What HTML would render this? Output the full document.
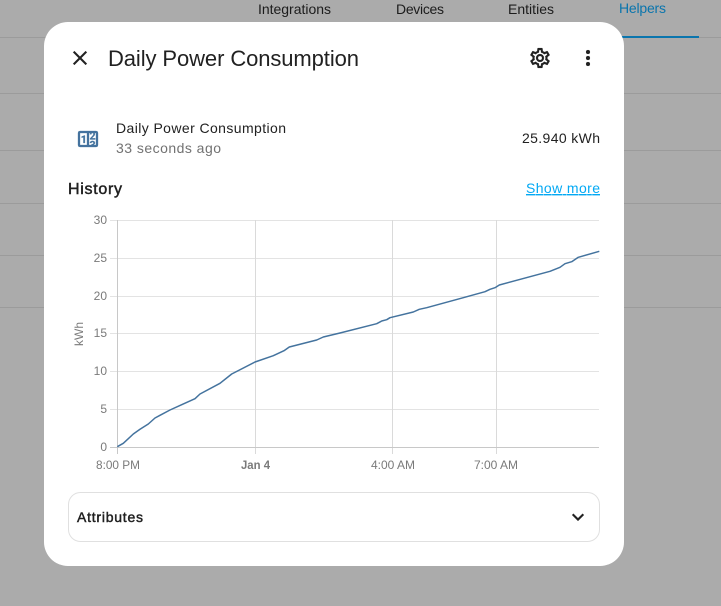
<!DOCTYPE html>
<html>
<head>
<meta charset="utf-8">
<title>Daily Power Consumption</title>
<style>
html,body{margin:0;padding:0;width:721px;height:606px;overflow:hidden;background:#ababab}
svg{display:block;font-family:"Liberation Sans",sans-serif}
.m{stroke-width:.45px}
.i{stroke:#212121;stroke-width:.15px}
</style>
</head>
<body>
<svg width="721" height="606" viewBox="0 0 721 606" xmlns="http://www.w3.org/2000/svg">
<rect width="721" height="606" fill="#ababab"/>
<g fill="#9b9b9b">
<rect y="37" width="721" height="1"/>
<rect y="93" width="721" height="1"/>
<rect y="150" width="721" height="1"/>
<rect y="203" width="721" height="1"/>
<rect y="255" width="721" height="1"/>
<rect y="307" width="721" height="1"/>
</g>
<rect x="619" y="36" width="80" height="2" fill="#0a75ad"/>
<g font-size="14" fill="#1c1c1c">
<text x="258" y="14" textLength="73" lengthAdjust="spacing">Integrations</text>
<text x="396" y="14" textLength="48" lengthAdjust="spacing">Devices</text>
<text x="508" y="14" textLength="46" lengthAdjust="spacing">Entities</text>
</g>
<text x="619" y="13" font-size="14" fill="#0a75ad" textLength="47" lengthAdjust="spacing">Helpers</text>

<rect x="44" y="22" width="580" height="544" rx="24" ry="24" fill="#fff"/>

<path class="i" transform="translate(68 46)" fill="#212121" d="M19,6.41L17.59,5L12,10.59L6.41,5L5,6.41L10.59,12L5,17.59L6.41,19L12,13.41L17.59,19L19,17.59L13.41,12L19,6.41Z"/>
<text x="108" y="66" font-size="22" fill="#212121" textLength="251" lengthAdjust="spacing">Daily Power Consumption</text>
<path class="i" transform="translate(528 46)" fill="#212121" d="M12,8A4,4 0 0,1 16,12A4,4 0 0,1 12,16A4,4 0 0,1 8,12A4,4 0 0,1 12,8M12,10A2,2 0 0,0 10,12A2,2 0 0,0 12,14A2,2 0 0,0 14,12A2,2 0 0,0 12,10M10,22C9.75,22 9.54,21.82 9.5,21.58L9.13,18.93C8.5,18.68 7.96,18.34 7.44,17.94L4.95,18.95C4.73,19.03 4.46,18.95 4.34,18.73L2.34,15.27C2.21,15.05 2.27,14.78 2.46,14.63L4.57,12.97L4.5,12L4.57,11L2.46,9.37C2.27,9.22 2.21,8.95 2.34,8.73L4.34,5.27C4.46,5.05 4.73,4.96 4.95,5.05L7.44,6.05C7.96,5.66 8.5,5.32 9.13,5.07L9.5,2.42C9.54,2.18 9.75,2 10,2H14C14.25,2 14.46,2.18 14.5,2.42L14.87,5.07C15.5,5.32 16.04,5.66 16.56,6.05L19.05,5.05C19.27,4.96 19.54,5.05 19.66,5.27L21.66,8.73C21.79,8.95 21.73,9.22 21.54,9.37L19.43,11L19.5,12L19.43,13L21.54,14.63C21.73,14.78 21.79,15.05 21.66,15.27L19.66,18.73C19.54,18.95 19.27,19.04 19.05,18.95L16.56,17.95C16.04,18.34 15.5,18.68 14.87,18.93L14.5,21.58C14.46,21.82 14.25,22 14,22H10M11.25,4L10.88,6.61C9.68,6.86 8.62,7.5 7.85,8.39L5.44,7.35L4.69,8.65L6.8,10.2C6.4,11.37 6.4,12.64 6.8,13.8L4.68,15.36L5.43,16.66L7.86,15.62C8.63,16.5 9.68,17.14 10.87,17.38L11.24,20H12.76L13.13,17.39C14.32,17.14 15.37,16.5 16.14,15.62L18.57,16.66L19.32,15.36L17.2,13.81C17.6,12.64 17.6,11.37 17.2,10.2L19.31,8.65L18.56,7.35L16.15,8.39C15.38,7.5 14.32,6.86 13.12,6.62L12.75,4H11.25Z"/>
<path class="i" transform="translate(576 46)" fill="#212121" d="M12,16A2,2 0 0,1 14,18A2,2 0 0,1 12,20A2,2 0 0,1 10,18A2,2 0 0,1 12,16M12,10A2,2 0 0,1 14,12A2,2 0 0,1 12,14A2,2 0 0,1 10,12A2,2 0 0,1 12,10M12,4A2,2 0 0,1 14,6A2,2 0 0,1 12,8A2,2 0 0,1 10,6A2,2 0 0,1 12,4Z"/>

<path transform="translate(76 127)" fill="#44739e" stroke="#44739e" stroke-width=".3" d="M4,4H20A2,2 0 0,1 22,6V18A2,2 0 0,1 20,20H4A2,2 0 0,1 2,18V6A2,2 0 0,1 4,4M4,6V18H11V6H4M20,18V6H18.76C19,6.54 18.95,7.07 18.95,7.13C18.88,7.8 18.41,8.5 18.24,8.75L15.91,11.3L19.23,11.28L19.24,12.5L14.04,12.47L14,11.47C14,11.47 17.05,8.24 17.2,7.95C17.34,7.67 17.91,6 16.5,6C15.27,6.05 15.41,7.3 15.41,7.3L13.87,7.31C13.87,7.31 13.88,6.65 14.25,6H13V18H15.58L15.57,17.14L16.54,17.13C16.54,17.13 17.45,16.97 17.46,16.08C17.5,15.08 16.65,15.08 16.5,15.08C16.37,15.08 15.43,15.13 15.43,15.95H13.91C13.91,15.95 13.95,13.89 16.5,13.89C19.1,13.89 18.96,15.91 18.96,15.91C18.96,15.91 19,17.16 17.85,17.63L18.37,18H20M8.92,16H7.42V10.2L5.62,10.76V9.53L8.76,8.41H8.92V16Z"/>
<text x="116" y="133" font-size="14" fill="#212121" textLength="170" lengthAdjust="spacing">Daily Power Consumption</text>
<text x="116" y="153" font-size="14" fill="#727272" textLength="105" lengthAdjust="spacing">33 seconds ago</text>
<text x="522" y="143" font-size="14" fill="#212121" textLength="78" lengthAdjust="spacing">25.940 kWh</text>

<text class="m" x="68" y="194" font-size="16" fill="#212121" stroke="#212121" textLength="54" lengthAdjust="spacing">History</text>
<text x="526" y="193" font-size="14" fill="#03a9f4" text-decoration="underline" textLength="74" lengthAdjust="spacing">Show more</text>

<g fill="#e3e3e3">
<rect x="110" y="220" width="489" height="1"/>
<rect x="110" y="258" width="489" height="1"/>
<rect x="110" y="296" width="489" height="1"/>
<rect x="110" y="333" width="489" height="1"/>
<rect x="110" y="371" width="489" height="1"/>
<rect x="110" y="409" width="489" height="1"/>
</g>
<g fill="#dadada">
<rect x="255" y="220" width="1" height="234"/>
<rect x="392" y="220" width="1" height="234"/>
<rect x="496" y="220" width="1" height="234"/>
</g>
<g fill="#c8c8c8">
<rect x="117" y="220" width="1" height="234"/>
<rect x="110" y="447" width="489" height="1"/>
</g>
<polyline fill="none" stroke="#44739e" stroke-width="1.5" stroke-linejoin="round" points="117.3,446.7 123.3,443.3 128.3,438.7 133.3,434 140,429.3 148.3,424 155,418 160,415.3 170,410 181.7,404.7 195,398.7 200,394 220,383.3 231.7,374 255,362 273.3,355.7 284,350.7 289.3,347 316.7,340 323.3,337 340,333 376.7,323.7 381.7,321 386.7,319.7 390,317.7 413.3,312 419.3,309.3 426.7,307.7 463.3,297.7 485,291.7 490,289.3 495,287.7 499.3,285 550,271.3 560,267.3 565,263.7 571.7,261.7 578.3,257.3 599.3,251.3"/>

<g font-size="12" fill="#7a7a7a">
<text x="107" y="224" text-anchor="end">30</text>
<text x="107" y="262" text-anchor="end">25</text>
<text x="107" y="300" text-anchor="end">20</text>
<text x="107" y="337" text-anchor="end">15</text>
<text x="107" y="375" text-anchor="end">10</text>
<text x="107" y="413" text-anchor="end">5</text>
<text x="107" y="451" text-anchor="end">0</text>
<text x="96" y="469" textLength="44" lengthAdjust="spacingAndGlyphs">8:00 PM</text>
<text x="241" y="469" font-weight="bold" textLength="29" lengthAdjust="spacingAndGlyphs">Jan 4</text>
<text x="371" y="469" textLength="44" lengthAdjust="spacingAndGlyphs">4:00 AM</text>
<text x="474" y="469" textLength="44" lengthAdjust="spacingAndGlyphs">7:00 AM</text>
<text transform="translate(83 346) rotate(-90)" textLength="24" lengthAdjust="spacingAndGlyphs">kWh</text>
</g>

<rect x="68.5" y="492.5" width="531" height="49" rx="12" ry="12" fill="#fff" stroke="#e0e0e0"/>
<text class="m" x="77" y="522" font-size="14" fill="#212121" stroke="#212121" textLength="66" lengthAdjust="spacing">Attributes</text>
<path class="i" transform="translate(566 505)" fill="#212121" d="M7.41,8.58L12,13.17L16.59,8.58L18,10L12,16L6,10L7.41,8.58Z"/>
</svg>
</body>
</html>
